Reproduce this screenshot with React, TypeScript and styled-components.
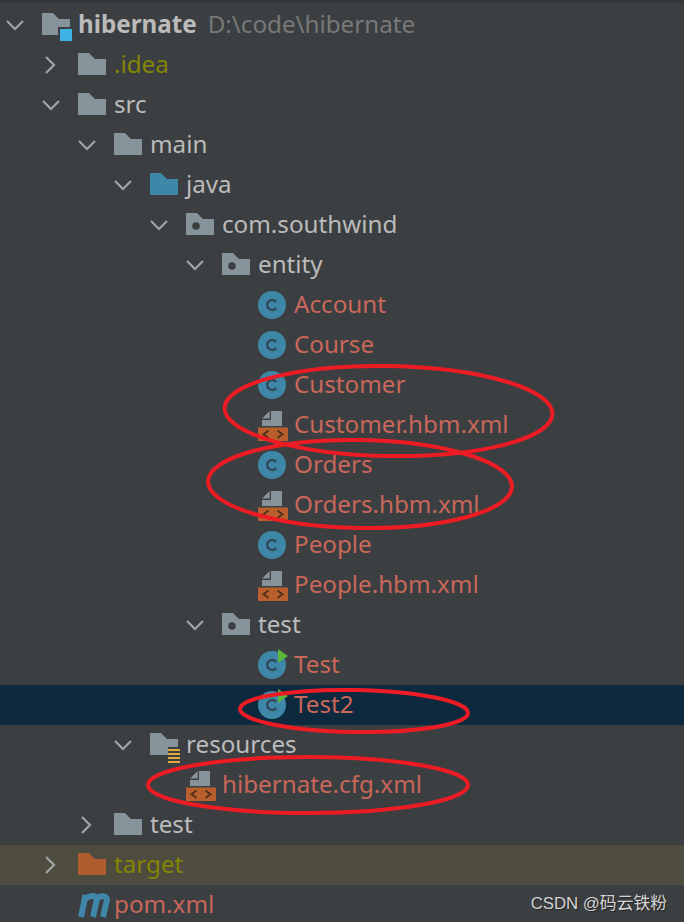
import styled, { createGlobalStyle } from "styled-components";

const GlobalStyle = createGlobalStyle`
    html, body {
        margin: 0;
        padding: 0;
        background-color: #3c3f41;
    }
`;

const Page = styled.div`
    position: relative;
    width: 684px;
    height: 922px;
    overflow: hidden;
    background-color: #3c3f41;
    border-top: 3px solid #333537;
    box-sizing: border-box;
    padding-top: 2px;
    font-family: "Noto Sans", "Liberation Sans", sans-serif;
    font-size: 24.2px;
`;

const Row = styled.div<{ $level: number; $bg?: string }>`
    display: flex;
    align-items: center;
    height: 40px;
    padding-left: ${(p) => p.$level * 36}px;
    background-color: ${(p) => p.$bg ?? "transparent"};
`;

const ToggleSlot = styled.div`
    width: 42px;
    height: 40px;
    flex: none;
    display: flex;
    align-items: center;
    padding-left: 6px;
    box-sizing: border-box;
`;

const IconSlot = styled.div`
    width: 28px;
    height: 40px;
    flex: none;
    margin-right: 8px;

    & svg {
        display: block;
        overflow: visible;
    }
`;

const Label = styled.span<{ $color?: string; $bold?: boolean }>`
    color: ${(p) => p.$color ?? "#bbbbbb"};
    font-weight: ${(p) => (p.$bold ? 700 : 400)};
    white-space: nowrap;
    margin-bottom: 3px;
`;

const PathHint = styled.span`
    color: #787878;
    margin-left: 11px;
    margin-bottom: 3px;
    white-space: nowrap;
`;

const Marks = styled.svg`
    position: absolute;
    top: 0;
    left: 0;
    margin-top: -3px;
    pointer-events: none;

    & ellipse {
        fill: none;
        stroke: #ed1c24;
        stroke-width: 4;
    }
`;

const Watermark = styled.div`
    position: absolute;
    right: 17px;
    bottom: 8px;
    color: #d4d4d4;
    font-family: "Liberation Sans", "Noto Sans CJK SC", sans-serif;
    font-size: 16.8px;
    text-shadow: 1px 1px 1px #222222;
    white-space: nowrap;
`;

const RED = "#c9675a";
const OLIVE = "#848504";
const GREY = "#87939a";

const Chevron = ({ open }: { open: boolean }) =>
    open ? (
        <svg width="18" height="12" viewBox="0 0 18 12">
            <path d="M1 2 L9 10 L17 2" fill="none" stroke="#a2a5a7" strokeWidth="2.2" />
        </svg>
    ) : (
        <svg width="18" height="18" viewBox="0 0 18 18">
            <path d="M4 1 L12 9 L4 17" fill="none" stroke="#a2a5a7" strokeWidth="2.2" />
        </svg>
    );

const FOLDER = "0,8 11,8 17,14 28,14 28,30 0,30";

const Folder = ({ color = GREY, dot }: { color?: string; dot?: boolean }) => (
    <svg width="28" height="40" viewBox="0 0 28 40">
        <polygon points={FOLDER} fill={color} />
        {dot && <circle cx="10" cy="21" r="3.8" fill="#3c3f41" />}
    </svg>
);

const ProjectFolder = () => (
    <svg width="28" height="40" viewBox="0 0 28 40">
        <polygon points="0,8 11,8 17,14 28,14 28,22 16,22 16,30 0,30" fill={GREY} />
        <rect x="18" y="24" width="12" height="12" fill="#3db3e6" />
    </svg>
);

const ResourceFolder = () => (
    <svg width="28" height="40" viewBox="0 0 28 40">
        <polygon points="0,8 11,8 17,14 28,14 28,22 18,22 18,30 0,30" fill={GREY} />
        <g fill="#e0a83e">
            <rect x="18" y="24" width="12" height="2" />
            <rect x="18" y="28" width="12" height="2" />
            <rect x="18" y="32" width="12" height="2" />
            <rect x="18" y="36" width="12" height="2" />
        </g>
    </svg>
);

const ClassIcon = ({ run }: { run?: boolean }) => (
    <svg width="28" height="40" viewBox="0 0 28 40">
        <circle cx="14" cy="20" r="14" fill="#3f87a8" />
        <path d="M18.2 17 A5 5 0 1 0 18.2 23" fill="none" stroke="#31495a" strokeWidth="2.4" />
        {run && <polygon points="20,4 30,11 20,18" fill="#5bb53c" />}
    </svg>
);

const XmlIcon = () => (
    <svg width="30" height="40" viewBox="0 0 30 40">
        <polygon points="13,6 24,6 24,21 4,21 4,15 13,15" fill={GREY} />
        <polygon points="4,13.5 11.7,6 11.7,13.5" fill={GREY} />
        <rect x="0" y="22.5" width="30" height="13.5" fill="#b85f2d" />
        <path d="M10.5 25.5 L5.5 29.3 L10.5 33 M19.5 25.5 L24.5 29.3 L19.5 33" fill="none" stroke="#51301a" strokeWidth="1.9" />
    </svg>
);

const MavenIcon = () => (
    <svg width="30" height="40" viewBox="0 0 30 40">
        <path
            d="M3 32 L7.5 10 M7 15 C9 11 18 9 19 14 L15 32 M18 15 C20 11 29 9 29 15 L25 32"
            fill="none"
            stroke="#3f87a8"
            strokeWidth="6"
        />
    </svg>
);

type Node = {
    level: number;
    name: string;
    open?: boolean;
    icon: React.ReactNode;
    color?: string;
    bg?: string;
    bold?: boolean;
    hint?: string;
};

const NODES: Node[] = [
    { level: 0, name: "hibernate", open: true, icon: <ProjectFolder />, bold: true, hint: "D:\\code\\hibernate" },
    { level: 1, name: ".idea", open: false, icon: <Folder />, color: OLIVE },
    { level: 1, name: "src", open: true, icon: <Folder /> },
    { level: 2, name: "main", open: true, icon: <Folder /> },
    { level: 3, name: "java", open: true, icon: <Folder color="#3f87a8" /> },
    { level: 4, name: "com.southwind", open: true, icon: <Folder dot /> },
    { level: 5, name: "entity", open: true, icon: <Folder dot /> },
    { level: 6, name: "Account", icon: <ClassIcon />, color: RED },
    { level: 6, name: "Course", icon: <ClassIcon />, color: RED },
    { level: 6, name: "Customer", icon: <ClassIcon />, color: RED },
    { level: 6, name: "Customer.hbm.xml", icon: <XmlIcon />, color: RED },
    { level: 6, name: "Orders", icon: <ClassIcon />, color: RED },
    { level: 6, name: "Orders.hbm.xml", icon: <XmlIcon />, color: RED },
    { level: 6, name: "People", icon: <ClassIcon />, color: RED },
    { level: 6, name: "People.hbm.xml", icon: <XmlIcon />, color: RED },
    { level: 5, name: "test", open: true, icon: <Folder dot /> },
    { level: 6, name: "Test", icon: <ClassIcon run />, color: RED },
    { level: 6, name: "Test2", icon: <ClassIcon run />, color: RED, bg: "#0d293e" },
    { level: 3, name: "resources", open: true, icon: <ResourceFolder /> },
    { level: 4, name: "hibernate.cfg.xml", icon: <XmlIcon />, color: RED },
    { level: 2, name: "test", open: false, icon: <Folder /> },
    { level: 1, name: "target", open: false, icon: <Folder color="#b05c2f" />, color: OLIVE, bg: "#4e4b3f" },
    { level: 1, name: "pom.xml", icon: <MavenIcon />, color: RED },
];

export default function App() {
    return (
        <Page>
            <GlobalStyle />
            {NODES.map((node, i) => (
                <Row key={i} $level={node.level} $bg={node.bg}>
                    <ToggleSlot>{node.open !== undefined && <Chevron open={node.open} />}</ToggleSlot>
                    <IconSlot>{node.icon}</IconSlot>
                    <Label $color={node.color} $bold={node.bold}>
                        {node.name}
                    </Label>
                    {node.hint && <PathHint>{node.hint}</PathHint>}
                </Row>
            ))}
            <Marks width="684" height="922" viewBox="0 0 684 922">
                <ellipse cx="388.5" cy="411" rx="164" ry="45" transform="rotate(1 388 411)" />
                <ellipse cx="360" cy="484" rx="152" ry="44" transform="rotate(1 360 484)" />
                <ellipse cx="354" cy="711" rx="114" ry="21" transform="rotate(1 354 711)" />
                <ellipse cx="308" cy="785" rx="160" ry="28" />
            </Marks>
            <Watermark>CSDN @码云铁粉</Watermark>
        </Page>
    );
}
